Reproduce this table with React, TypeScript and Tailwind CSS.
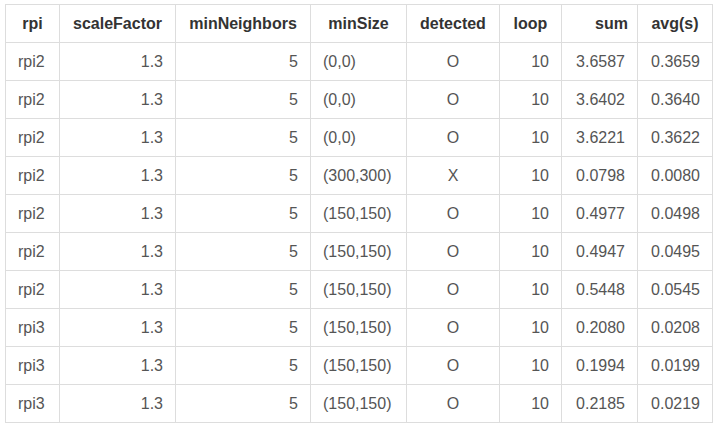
const headers = ["rpi", "scaleFactor", "minNeighbors", "minSize", "detected", "loop", "sum", "avg(s)"]

const widths = ["w-[54px]", "w-[116px]", "w-[135px]", "w-[96px]", "w-[93px]", "w-[62px]", "w-[76px]", "w-[75px]"]

// alignment per column for body cells
const align = ["text-left", "text-right", "text-right", "text-left", "text-center", "text-right", "text-right", "text-right"]

// header alignment: all centered except sum, which sits right
const headAlign = ["text-center px-3", "text-center px-3", "text-center px-3", "text-center px-3", "text-center px-3", "text-center px-3", "text-right pl-3 pr-[9px]", "text-center px-3"]

const rows = [
  ["rpi2", "1.3", "5", "(0,0)", "O", "10", "3.6587", "0.3659"],
  ["rpi2", "1.3", "5", "(0,0)", "O", "10", "3.6402", "0.3640"],
  ["rpi2", "1.3", "5", "(0,0)", "O", "10", "3.6221", "0.3622"],
  ["rpi2", "1.3", "5", "(300,300)", "X", "10", "0.0798", "0.0080"],
  ["rpi2", "1.3", "5", "(150,150)", "O", "10", "0.4977", "0.0498"],
  ["rpi2", "1.3", "5", "(150,150)", "O", "10", "0.4947", "0.0495"],
  ["rpi2", "1.3", "5", "(150,150)", "O", "10", "0.5448", "0.0545"],
  ["rpi3", "1.3", "5", "(150,150)", "O", "10", "0.2080", "0.0208"],
  ["rpi3", "1.3", "5", "(150,150)", "O", "10", "0.1994", "0.0199"],
  ["rpi3", "1.3", "5", "(150,150)", "O", "10", "0.2185", "0.0219"],
]

export default function App() {
  return (
    <div className="w-[715px] h-[430px] bg-white pl-[5px] pt-[4px] font-['Liberation_Sans',Arial,sans-serif] text-[16px]">
      <table className="table-fixed border-collapse w-[708px]">
        <colgroup>
          {widths.map((w, i) => (
            <col key={i} className={w} />
          ))}
        </colgroup>
        <thead>
          <tr className="h-[38px]">
            {headers.map((h, i) => (
              <th key={h} className={`border border-[#dddddd] font-bold text-[#333333] ${headAlign[i]}`}>
                {h}
              </th>
            ))}
          </tr>
        </thead>
        <tbody>
          {rows.map((r, i) => (
            <tr key={i} className="h-[38px]">
              {r.map((c, j) => (
                <td key={j} className={`border border-[#dddddd] px-3 text-[#555555] ${align[j]}`}>
                  {c}
                </td>
              ))}
            </tr>
          ))}
        </tbody>
      </table>
    </div>
  )
}
